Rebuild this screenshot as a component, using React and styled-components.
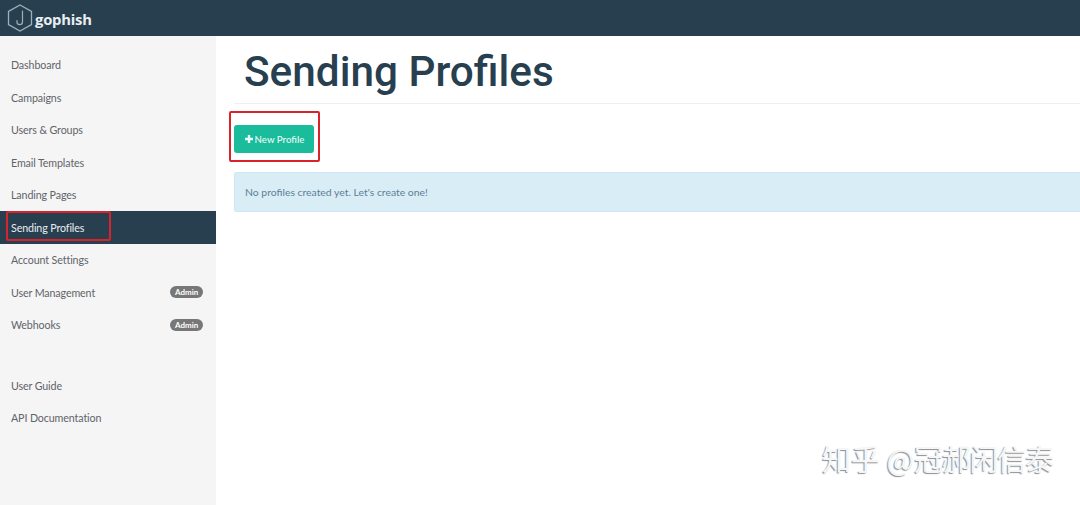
import React from "react";
import styled, { createGlobalStyle } from "styled-components";

const GlobalStyle = createGlobalStyle`
  html, body {
    margin: 0;
    padding: 0;
    height: 100%;
    background: #fff;
    overflow: hidden;
  }
  body {
    font-family: "Lato", "Open Sans", sans-serif;
  }
`;

const Page = styled.div`
  position: relative;
  width: 1080px;
  height: 505px;
  display: grid;
  grid-template-rows: 36px 1fr;
  overflow: hidden;
`;

const Navbar = styled.header`
  background: #283f50;
  display: flex;
  align-items: center;
  gap: 2px;
  padding-left: 7px;
`;

const Brand = styled.span`
  font-family: "Open Sans", sans-serif;
  font-size: 14.8px;
  font-weight: 700;
  letter-spacing: -0.2px;
  color: #e9eef1;
  margin-top: 1px;
`;

const Body = styled.div`
  display: grid;
  grid-template-columns: 216px 1fr;
  min-height: 0;
`;

const Sidebar = styled.nav`
  background: #f5f5f5;
  padding-top: 12.5px;
  display: flex;
  flex-direction: column;
`;

const NavRow = styled.div`
  position: relative;
  height: 32.5px;
  box-sizing: border-box;
  padding: 0 13px 0 11px;
  display: flex;
  align-items: center;
  justify-content: space-between;
  font-size: 10.7px;
  letter-spacing: -0.12px;
  color: ${(p) => (p.$active ? "#e8edf0" : "#5f6468")};
  background: ${(p) => (p.$active ? "#283f50" : "transparent")};
`;

const NavGap = styled.div`
  height: 28px;
`;

const Badge = styled.span`
  background: #777;
  color: #fff;
  border-radius: 7px;
  font-size: 8px;
  font-weight: 700;
  letter-spacing: 0;
  line-height: 12px;
  padding: 0 5px;
  width: 33px;
  box-sizing: border-box;
  text-align: center;
`;

const SideMark = styled.span`
  position: absolute;
  left: 6px;
  top: 0;
  width: 105px;
  height: 30px;
  box-sizing: border-box;
  border: 2px solid #d8232a;
  border-radius: 2px;
`;

const Main = styled.main`
  display: flex;
  flex-direction: column;
  padding-left: 18px;
`;

const Header = styled.div`
  height: 68px;
  box-sizing: border-box;
  border-bottom: 1px solid #eee;
  padding-left: 10px;
`;

const Title = styled.h1`
  margin: 0;
  font-family: "Roboto", sans-serif;
  font-size: 42.3px;
  font-weight: 500;
  line-height: 71px;
  color: #283f50;
`;

const ButtonMark = styled.div`
  align-self: flex-start;
  margin: 7px 0 0 -5px;
  width: 91px;
  height: 51px;
  box-sizing: border-box;
  border: 2px solid #d8232a;
  border-radius: 2px;
  padding: 12px 0 0 3px;
`;

const Button = styled.div`
  width: 80px;
  height: 28px;
  background: #1abc9c;
  border-radius: 3px;
  display: flex;
  align-items: center;
  justify-content: center;
  gap: 1px;
  color: #eafaf6;
  font-size: 9.7px;
  font-weight: 500;
  padding-bottom: 1px;
  box-sizing: border-box;
`;

const Alert = styled.div`
  margin: 10px 0 0 0;
  height: 40px;
  background: #d9edf7;
  border: 1px solid #cfe6f0;
  border-right: 0;
  border-radius: 3px 0 0 3px;
  box-sizing: border-box;
  display: flex;
  align-items: center;
  padding-left: 10px;
  font-size: 10.4px;
  color: #5d7f95;
`;

const Watermark = styled.div`
  position: absolute;
  left: 822px;
  top: 439px;
  font-family: "Noto Sans CJK SC", sans-serif;
  font-size: 29px;
  line-height: 38px;
  white-space: nowrap;
  color: #f6f6f6;
  text-shadow: -1px 1px 1px #8e8e8e;
`;

const WatermarkName = styled.span`
  font-size: 29px;
  letter-spacing: -1.2px;
`;

const Logo = () => (
  <svg width="26" height="30" viewBox="0 0 26 30" fill="none">
    <path d="M13 2 L24.5 8.5 V21.5 L13 28 L1.5 21.5 V8.5 Z" stroke="#9fb0bb" strokeWidth="1.3" />
    <path
      d="M15.5 8 V19 C15.5 22.5 10 22.5 10 19 V17.5"
      stroke="#9fb0bb"
      strokeWidth="1.2"
      strokeLinecap="round"
    />
  </svg>
);

const PlusIcon = () => (
  <svg width="10" height="10" viewBox="0 0 10 10">
    <path d="M5 1 V9 M1 5 H9" stroke="#eafaf6" strokeWidth="2.4" />
  </svg>
);

const navItems = [
  { label: "Dashboard" },
  { label: "Campaigns" },
  { label: "Users & Groups" },
  { label: "Email Templates" },
  { label: "Landing Pages" },
  { label: "Sending Profiles", active: true },
  { label: "Account Settings" },
  { label: "User Management", admin: true },
  { label: "Webhooks", admin: true },
];

function App() {
  return (
    <Page>
      <GlobalStyle />
      <Navbar>
        <Logo />
        <Brand>gophish</Brand>
      </Navbar>
      <Body>
        <Sidebar>
          {navItems.map((item) => (
            <NavRow key={item.label} $active={item.active}>
              {item.label}
              {item.admin && <Badge>Admin</Badge>}
              {item.active && <SideMark />}
            </NavRow>
          ))}
          <NavGap />
          <NavRow>User Guide</NavRow>
          <NavRow>API Documentation</NavRow>
        </Sidebar>
        <Main>
          <Header>
            <Title>Sending Profiles</Title>
          </Header>
          <ButtonMark>
            <Button>
              <PlusIcon />
              New Profile
            </Button>
          </ButtonMark>
          <Alert>No profiles created yet. Let's create one!</Alert>
        </Main>
      </Body>
      <Watermark>
        知乎 @<WatermarkName>冠郝闲信泰</WatermarkName>
      </Watermark>
    </Page>
  );
}

export default App;
